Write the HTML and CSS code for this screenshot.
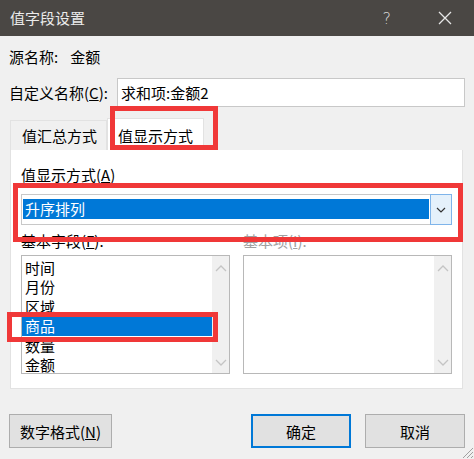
FILE: index.html
```html
<!DOCTYPE html>
<html lang="zh-CN">
<head>
    <meta charset="UTF-8">
    <meta name="viewport" content="width=device-width, initial-scale=1.0">
    <title>值字段设置</title>
    <link rel="stylesheet" href="styles.css">
</head>
<body>
    <div class="dialog">
        <div class="titlebar">
            <span class="title">值字段设置</span>
            <span class="help">?</span>
            <svg class="close" width="14" height="14" viewBox="0 0 14 14">
                <path d="M1 1 L13 13 M13 1 L1 13" stroke="#e6e6e6" stroke-width="1.3" fill="none"/>
            </svg>
        </div>

        <div class="content">
            <div class="row source">
                <span>源名称:</span>
                <span class="source-name">金额</span>
            </div>
            <div class="row custom">
                <label for="name">自定义名称(<u>C</u>):</label>
                <input id="name" class="name-input" type="text" value="求和项:金额2">
            </div>

            <div class="tabs">
                <div class="tab">值汇总方式</div>
                <div class="tab active">值显示方式</div>
            </div>

            <div class="panel">
                <div class="panel-label">值显示方式(<u>A</u>)</div>
                <div class="combo">
                    <div class="combo-value"><span>升序排列</span></div>
                    <div class="combo-btn">
                        <svg width="10" height="6" viewBox="0 0 10 6">
                            <path d="M1 1 L5 5 L9 1" stroke="#333" stroke-width="1.2" fill="none"/>
                        </svg>
                    </div>
                </div>

                <div class="lists">
                    <div class="list-col">
                        <div class="list-label">基本字段(<u>F</u>):</div>
                        <div class="listbox">
                            <ul class="items">
                                <li>时间</li>
                                <li>月份</li>
                                <li>区域</li>
                                <li class="selected">商品</li>
                                <li>数量</li>
                                <li>金额</li>
                            </ul>
                            <div class="scrollbar">
                                <svg width="12" height="7" viewBox="0 0 12 7"><path d="M1 6 L6 1 L11 6" stroke="#c4c4c4" stroke-width="1.3" fill="none"/></svg>
                                <svg width="12" height="7" viewBox="0 0 12 7"><path d="M1 1 L6 6 L11 1" stroke="#c4c4c4" stroke-width="1.3" fill="none"/></svg>
                            </div>
                        </div>
                    </div>
                    <div class="list-col">
                        <div class="list-label disabled">基本项(<u>I</u>):</div>
                        <div class="listbox">
                            <ul class="items"></ul>
                            <div class="scrollbar">
                                <svg width="12" height="7" viewBox="0 0 12 7"><path d="M1 6 L6 1 L11 6" stroke="#c4c4c4" stroke-width="1.3" fill="none"/></svg>
                                <svg width="12" height="7" viewBox="0 0 12 7"><path d="M1 1 L6 6 L11 1" stroke="#c4c4c4" stroke-width="1.3" fill="none"/></svg>
                            </div>
                        </div>
                    </div>
                </div>
            </div>

            <div class="footer">
                <button class="btn">数字格式(<u>N</u>)</button>
                <div class="spacer"></div>
                <button class="btn default">确定</button>
                <button class="btn">取消</button>
            </div>
        </div>

        <svg class="grip" width="14" height="14" viewBox="0 0 14 14">
            <path d="M13 3 L3 13 M13 7 L7 13 M13 11 L11 13" stroke="#a0a0a0" stroke-width="1" fill="none"/>
        </svg>

        <!-- annotation boxes -->
        <div class="mark mark-tab"></div>
        <div class="mark mark-combo"></div>
        <div class="mark mark-item"></div>
    </div>
</body>
</html>
```

FILE: styles.css
```css
body {
    margin: 0;
    padding: 0;
    font-family: "Noto Sans CJK SC", "Microsoft YaHei", sans-serif;
    font-size: 15px;
    color: #000;
    background: #f0f0f0;
}

.dialog {
    position: relative;
    width: 474px;
    height: 459px;
    background: #f0f0f0;
    overflow: hidden;
}

.titlebar {
    height: 36px;
    background-color: #4a4744;
    color: #ebebeb;
    display: flex;
    align-items: center;
    padding: 0 0 0 10px;
    box-sizing: border-box;
}

.title {
    flex: 1;
    font-size: 15px;
    line-height: 20px;
}

.help {
    font-family: "DejaVu Sans", sans-serif;
    font-size: 16px;
    font-weight: 200;
    color: #d8d8d8;
    margin-right: 47px;
}

.close {
    margin-right: 22px;
}

.content {
    padding: 0 9px;
}

.row {
    display: flex;
    align-items: center;
    line-height: 20px;
}

.source {
    margin-top: 11px;
}

.source-name {
    margin-left: 12px;
}

.custom {
    margin-top: 11px;
}

.custom label {
    width: 108px;
}

.name-input {
    width: 348px;
    height: 29px;
    box-sizing: border-box;
    border: 1px solid #c8c8c8;
    background: #fff;
    font-family: inherit;
    font-size: 15px;
    padding: 0 3px;
    outline: none;
}

.tabs {
    display: flex;
    align-items: flex-end;
    margin-top: 11px;
    margin-left: 1px;
    height: 32px;
}

.tab {
    height: 30px;
    line-height: 30px;
    padding: 0 0 0 11px;
    box-sizing: border-box;
    border: 1px solid #e2e2e2;
    border-bottom: none;
    width: 97px;
    white-space: nowrap;
}

.tab.active {
    height: 32px;
    line-height: 34px;
    background: #fff;
    border-color: #e2e2e2;
    padding-left: 10px;
}

.panel {
    margin-left: 1px;
    width: 453px;
    height: 239px;
    box-sizing: border-box;
    background: #fff;
    border: 1px solid #e2e2e2;
    border-top: none;
    padding: 15px 10px 0 10px;
}

.panel-label {
    line-height: 20px;
}

.combo {
    margin-top: 9px;
    height: 31px;
    display: flex;
    border: 1px solid #c8c8c8;
    box-sizing: border-box;
}

.combo-value {
    flex: 1;
    padding: 4px 1px;
}

.combo-value span {
    display: block;
    height: 20px;
    line-height: 20px;
    background: #0078d7;
    color: #fff;
    padding-left: 2px;
}

.combo-btn {
    width: 20px;
    background: #e5f1fb;
    display: flex;
    align-items: center;
    justify-content: center;
    margin: -1px -1px -1px 0;
    border: 1px solid #7eb4ea;
}

.lists {
    display: flex;
    gap: 13px;
    margin-top: 6px;
}

.list-col {
    width: 209px;
}

.list-label {
    line-height: 20px;
    height: 20px;
}

.list-label.disabled {
    color: #a0a0a0;
}

.listbox {
    margin-top: 4px;
    height: 119px;
    display: flex;
    border: 1px solid #b8b8b8;
    box-sizing: border-box;
}

.items {
    list-style: none;
    margin: 0;
    padding: 2px 0 0 0;
    flex: 1;
}

.items li {
    height: 19.4px;
    line-height: 19px;
    padding-left: 3px;
}

.items li.selected {
    background: #0078d7;
    color: #fff;
}

.scrollbar {
    width: 17px;
    background: #f0f0f0;
    display: flex;
    flex-direction: column;
    justify-content: space-between;
    align-items: center;
    padding: 9px 0 7px 0;
}

.footer {
    display: flex;
    gap: 14px;
    margin-top: 25px;
}

.spacer {
    flex: 1;
}

.btn {
    height: 34px;
    width: 100px;
    background: #e1e1e1;
    border: 1px solid #adadad;
    font-family: inherit;
    font-size: 15px;
    color: #000;
    padding: 0;
}

.btn:first-child {
    width: 103px;
}

.btn.default {
    border: 2px solid #0078d7;
}

.grip {
    position: absolute;
    right: 0;
    bottom: 0;
}

.mark {
    position: absolute;
    border: 5px solid #f03838;
    box-sizing: border-box;
}

.mark-tab {
    left: 110px;
    top: 106px;
    width: 108px;
    height: 44px;
}

.mark-combo {
    left: 13px;
    top: 183px;
    width: 450px;
    height: 59px;
}

.mark-item {
    left: 7px;
    top: 312px;
    width: 211px;
    height: 30px;
}
```
